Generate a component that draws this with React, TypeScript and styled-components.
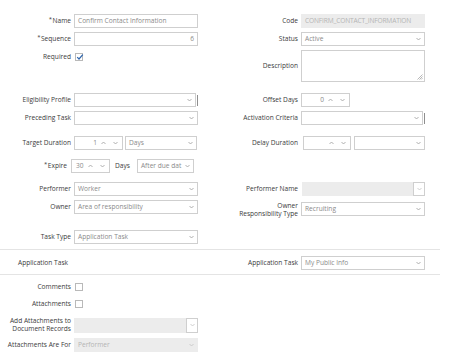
import React from "react";
import styled, { createGlobalStyle } from "styled-components";

const Global = createGlobalStyle`
  html, body { margin: 0; padding: 0; background: #fff; }
  body {
    font-family: "Open Sans", "Noto Sans", sans-serif;
    font-size: 6.6px;
    color: #333;
  }
`;

const Page = styled.div`
  width: 474px;
  height: 357px;
  overflow: hidden;
  padding-top: 14px;
  box-sizing: border-box;
`;

const Row = styled.div<{ $mt?: number; $center?: boolean }>`
  display: grid;
  grid-template-columns: 74px 124px 103px 124px;
  align-items: ${(p) => (p.$center ? "center" : "start")};
  margin-top: ${(p) => p.$mt ?? 0}px;
`;

const Label = styled.div<{ $pr?: number; $two?: boolean; $pt?: number }>`
  padding-right: ${(p) => p.$pr ?? 3}px;
  padding-top: ${(p) => p.$pt ?? 0}px;
  text-align: right;
  line-height: ${(p) => (p.$two ? "8px" : "14px")};
  min-height: 14px;
  white-space: ${(p) => (p.$two ? "normal" : "nowrap")};
  color: #3a3a3a;
`;

const Star = styled.sup`
  font-size: 6px;
  vertical-align: 2px;
  line-height: 0;
  margin-right: 0.5px;
`;

const Box = styled.div<{ $h?: number; $disabled?: boolean; $align?: string; $w?: number; $mt?: number }>`
  position: relative;
  box-sizing: border-box;
  height: ${(p) => p.$h ?? 14}px;
  width: ${(p) => (p.$w ? `${p.$w}px` : "auto")};
  margin-top: ${(p) => p.$mt ?? 0}px;
  border: 1px solid ${(p) => (p.$disabled ? "#ececec" : "#cfcfcf")};
  background: ${(p) => (p.$disabled ? "#ececec" : "#fff")};
  color: ${(p) => (p.$disabled ? "#b4b4b4" : "#8a8a8a")};
  padding: 0 3px;
  line-height: 12px;
  text-align: ${(p) => p.$align ?? "left"};
  display: flex;
  align-items: center;
  justify-content: ${(p) => (p.$align === "right" ? "flex-end" : "space-between")};
  white-space: nowrap;
  overflow: hidden;
`;

const CodeText = styled.span`
  letter-spacing: -0.15px;
`;

const FieldLine = styled.div<{ $gap?: number; $ml?: number }>`
  display: flex;
  align-items: center;
  gap: ${(p) => p.$gap ?? 0}px;
  margin-left: ${(p) => p.$ml ?? 0}px;
`;

const Bar = styled.div`
  width: 1px;
  height: 11px;
  background: #8e8e8e;
  margin-left: 1px;
  flex: none;
`;

const SpinBox = styled.div<{ $w: number }>`
  box-sizing: border-box;
  width: ${(p) => p.$w}px;
  height: 14px;
  border: 1px solid #cfcfcf;
  display: flex;
  align-items: center;
  color: #8a8a8a;
  flex: none;
`;

const SpinValue = styled.div<{ $left?: boolean }>`
  flex: 1;
  text-align: ${(p) => (p.$left ? "left" : "right")};
  padding-left: 4px;
  padding-right: ${(p) => (p.$left ? 0 : 4)}px;
  line-height: 12px;
`;

const SpinArrows = styled.div`
  display: flex;
  gap: 7px;
  padding-right: 4px;
  flex: none;
`;

const Chev = ({ up, color = "#9c9c9c" }: { up?: boolean; color?: string }) => (
  <svg width="5" height="4" viewBox="0 0 5 4" style={{ display: "block", flex: "none" }}>
    <polyline
      points={up ? "0.5,3 2.5,1 4.5,3" : "0.5,1 2.5,3 4.5,1"}
      fill="none"
      stroke={color}
      strokeWidth="0.8"
    />
  </svg>
);

const Check = styled.div<{ $mt?: number }>`
  box-sizing: border-box;
  width: 8px;
  height: 8px;
  border: 1px solid #b9b9b9;
  background: #fff;
  margin-left: 1px;
  margin-top: ${(p) => p.$mt ?? 3}px;
  position: relative;
  svg { position: absolute; left: 0; top: -1px; }
`;

const CheckSlot = styled.div`
  height: 14px;
  display: flex;
  align-items: flex-start;
`;

const TextArea = styled.div`
  box-sizing: border-box;
  height: 32px;
  border: 1px solid #cfcfcf;
  position: relative;
  svg { position: absolute; right: 1px; bottom: 1px; }
`;

const Divider = styled.div<{ $mt: number }>`
  width: 440px;
  height: 1px;
  background: #e4e4e4;
  margin-top: ${(p) => p.$mt}px;
`;

const ExpireLine = styled.div`
  grid-column: 1 / span 2;
  display: flex;
  align-items: center;
`;

const ExpireLabel = styled.div`
  width: 67px;
  text-align: right;
  line-height: 14px;
  margin-right: 4px;
  flex: none;
  color: #3a3a3a;
`;

const DaysText = styled.div`
  margin: 0 7px 0 5px;
  color: #3a3a3a;
  line-height: 14px;
`;

const PickButton = styled.div`
  box-sizing: border-box;
  width: 12px;
  height: 100%;
  border: 1px solid #cfcfcf;
  background: #fff;
  display: flex;
  align-items: center;
  justify-content: center;
  flex: none;
`;

const PickField = styled.div<{ $h?: number; $ml?: number }>`
  display: flex;
  height: ${(p) => p.$h ?? 14}px;
  margin-left: ${(p) => p.$ml ?? 0}px;
`;

const PickInput = styled.div`
  flex: 1;
  background: #ececec;
`;

const Grow = styled.div`
  flex: 1;
`;

const Select = ({
  value,
  disabled,
  w,
  mt,
}: {
  value?: string;
  disabled?: boolean;
  w?: number;
  mt?: number;
}) => (
  <Box $disabled={disabled} $w={w} $mt={mt}>
    <span>{value ?? ""}</span>
    <Chev color={disabled ? "#c4c4c4" : "#9c9c9c"} />
  </Box>
);

const Spin = ({ w, value, left }: { w: number; value?: string; left?: boolean }) => (
  <SpinBox $w={w}>
    <SpinValue $left={left}>{value ?? ""}</SpinValue>
    <SpinArrows>
      <Chev up />
      <Chev />
    </SpinArrows>
  </SpinBox>
);

const CheckMark = () => (
  <svg width="8" height="8" viewBox="0 0 8 8">
    <polyline points="1.2,4.2 3,6 6.8,1.6" fill="none" stroke="#2f66ad" strokeWidth="1.2" />
  </svg>
);

const Grip = () => (
  <svg width="6" height="6" viewBox="0 0 6 6">
    <line x1="0.5" y1="5.5" x2="5.5" y2="0.5" stroke="#999" strokeWidth="0.7" />
    <line x1="2.5" y1="5.5" x2="5.5" y2="2.5" stroke="#999" strokeWidth="0.7" />
    <line x1="4.2" y1="5.5" x2="5.5" y2="4.2" stroke="#999" strokeWidth="0.7" />
  </svg>
);

const DescLabel = styled(Label)`
  line-height: 32px;
`;

export default function App() {
  return (
    <Page>
      <Global />
      <Row>
        <Label>
          <Star>*</Star>Name
        </Label>
        <Box>Confirm Contact Information</Box>
        <Label>Code</Label>
        <Box $disabled>
          <CodeText>CONFIRM_CONTACT_INFORMATION</CodeText>
        </Box>
      </Row>
      <Row $mt={4}>
        <Label>
          <Star>*</Star>Sequence
        </Label>
        <Box $align="right">6</Box>
        <Label>Status</Label>
        <Select value="Active" />
      </Row>
      <Row $mt={4}>
        <Label>Required</Label>
        <CheckSlot>
          <Check>
            <CheckMark />
          </Check>
        </CheckSlot>
        <DescLabel>Description</DescLabel>
        <TextArea>
          <Grip />
        </TextArea>
      </Row>
      <Row $mt={11}>
        <Label>Eligibility Profile</Label>
        <FieldLine>
          <Grow>
            <Select />
          </Grow>
          <Bar />
        </FieldLine>
        <Label>Offset Days</Label>
        <Spin w={49} value="0" />
      </Row>
      <Row $mt={4}>
        <Label>Preceding Task</Label>
        <Select />
        <Label>Activation Criteria</Label>
        <FieldLine>
          <Grow>
            <Select />
          </Grow>
          <Bar />
        </FieldLine>
      </Row>
      <Row $mt={11}>
        <Label>Target Duration</Label>
        <FieldLine $gap={2}>
          <Spin w={49} value="1" />
          <Select value="Days" w={72} />
        </FieldLine>
        <Label>Delay Duration</Label>
        <FieldLine $gap={3} $ml={2}>
          <Spin w={48} />
          <Select w={72} />
        </FieldLine>
      </Row>
      <Row $mt={9}>
        <ExpireLine>
          <ExpireLabel>
            <Star>*</Star>Expire
          </ExpireLabel>
          <Spin w={39} value="30" left />
          <DaysText>Days</DaysText>
          <Select value="After due dat" w={57} />
        </ExpireLine>
      </Row>
      <Row $mt={9}>
        <Label>Performer</Label>
        <Select value="Worker" />
        <Label>Performer Name</Label>
        <PickField $ml={1}>
          <PickInput />
          <PickButton>
            <Chev color="#c4c4c4" />
          </PickButton>
        </PickField>
      </Row>
      <Row $mt={4}>
        <Label>Owner</Label>
        <Select value="Area of responsibility" />
        <Label $two $pt={2}>
          Owner
          <br />
          Responsibility Type
        </Label>
        <Select value="Recruiting" mt={2} />
      </Row>
      <Row $mt={12}>
        <Label>Task Type</Label>
        <Select value="Application Task" />
      </Row>
      <Divider $mt={5} />
      <Row $mt={6}>
        <Label $pr={6}>Application Task</Label>
        <div />
        <Label>Application Task</Label>
        <Select value="My Public Info" />
      </Row>
      <Divider $mt={4} />
      <Row $mt={5}>
        <Label>Comments</Label>
        <CheckSlot>
          <Check />
        </CheckSlot>
      </Row>
      <Row $mt={3}>
        <Label>Attachments</Label>
        <CheckSlot>
          <Check />
        </CheckSlot>
      </Row>
      <Row $mt={6} $center>
        <Label $two>
          Add Attachments to
          <br />
          Document Records
        </Label>
        <PickField $h={15}>
          <PickInput />
          <PickButton>
            <Chev color="#c4c4c4" />
          </PickButton>
        </PickField>
      </Row>
      <Row $mt={5}>
        <Label>Attachments Are For</Label>
        <Select value="Performer" disabled />
      </Row>
    </Page>
  );
}
